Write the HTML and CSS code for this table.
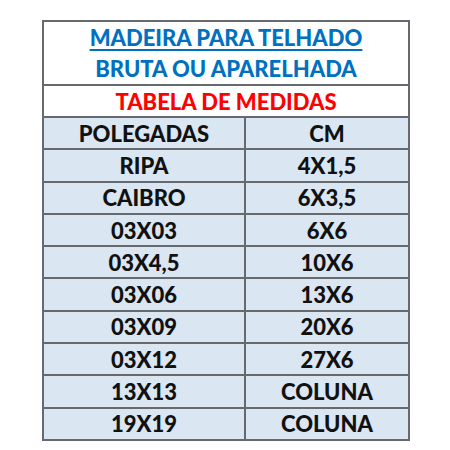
FILE: index.html
```html
<!DOCTYPE html>
<html>
<head>
<meta charset="utf-8">
<link rel="stylesheet" href="styles.css">
</head>
<body>
<table class="tabela">
  <colgroup><col class="col1"><col class="col2"></colgroup>
  <tr class="titulo">
    <td colspan="2"><span class="sub">MADEIRA PARA TELHADO</span><br>BRUTA OU APARELHADA</td>
  </tr>
  <tr class="vermelho">
    <td colspan="2">TABELA DE MEDIDAS</td>
  </tr>
  <tr class="linha"><td>POLEGADAS</td><td>CM</td></tr>
  <tr class="linha"><td>RIPA</td><td>4X1,5</td></tr>
  <tr class="linha"><td>CAIBRO</td><td>6X3,5</td></tr>
  <tr class="linha"><td>03X03</td><td>6X6</td></tr>
  <tr class="linha"><td>03X4,5</td><td>10X6</td></tr>
  <tr class="linha"><td>03X06</td><td>13X6</td></tr>
  <tr class="linha"><td>03X09</td><td>20X6</td></tr>
  <tr class="linha"><td>03X12</td><td>27X6</td></tr>
  <tr class="linha"><td>13X13</td><td>COLUNA</td></tr>
  <tr class="linha"><td>19X19</td><td>COLUNA</td></tr>
</table>
</body>
</html>
```
FILE: styles.css
```css
html, body {
  margin: 0;
  padding: 0;
  background: #ffffff;
}
body {
  padding: 20px 0 0 42px;
  font-family: Lato, "Liberation Sans", sans-serif;
  font-weight: 900;
}
.tabela {
  border-collapse: collapse;
  width: 368px;
  table-layout: fixed;
}
.col1 {
  width: 202px;
}
.tabela td {
  border: 2px solid #666a6e;
  text-align: center;
  padding: 0;
  font-size: 22px;
  color: #111111;
}
.titulo td {
  height: 62px;
  color: #0070c0;
  line-height: 31px;
  background: #ffffff;
}
.sub {
  text-decoration: underline;
  text-decoration-thickness: 2px;
  text-underline-offset: 3px;
}
.vermelho td {
  height: 30px;
  color: #ff0000;
  background: #ffffff;
}
.linha td {
  height: 30.3px;
  background: #dae6f2;
}
```
